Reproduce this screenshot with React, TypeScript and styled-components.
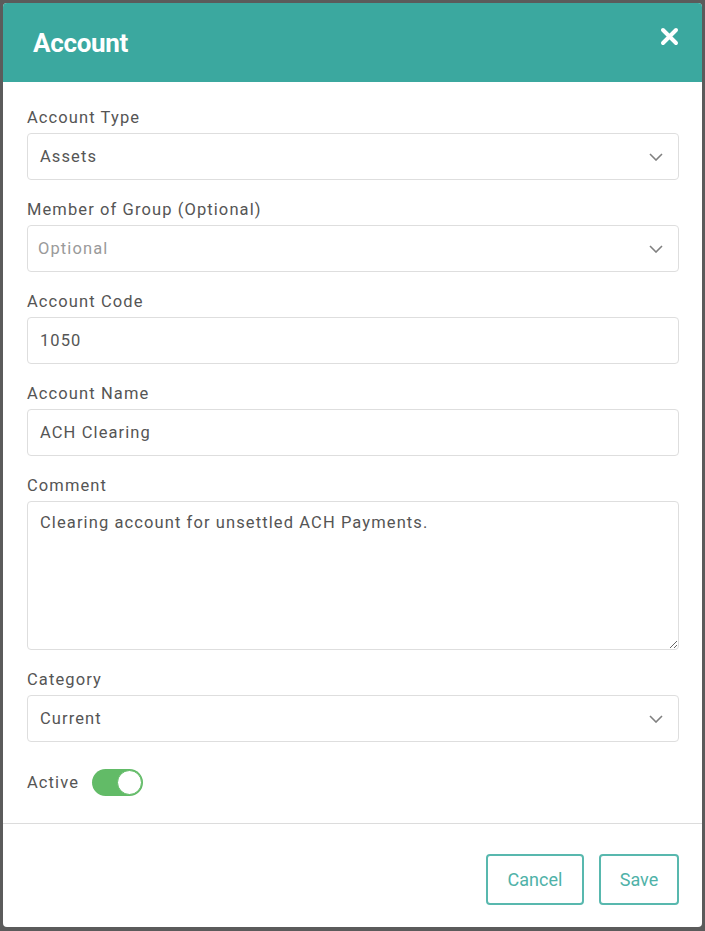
import React from "react";
import styled, { createGlobalStyle } from "styled-components";

const Global = createGlobalStyle`
  html, body { margin: 0; padding: 0; background: #5b5b5b; }
  body { font-family: Roboto, "Liberation Sans", Arial, sans-serif; }
  * { box-sizing: border-box; }
`;

const Frame = styled.div`
  width: 705px;
  height: 931px;
  padding: 3px 3px 4px 3px;
  background: #5b5b5b;
`;

const Dialog = styled.div`
  height: 100%;
  background: #fff;
  border-radius: 4px;
  overflow: hidden;
  display: flex;
  flex-direction: column;
`;

const Header = styled.div`
  height: 79px;
  background: #3ba89f;
  display: flex;
  align-items: center;
  justify-content: space-between;
  padding: 0 22px 0 30px;
`;

const Title = styled.h1`
  margin: 0;
  font-size: 26px;
  font-weight: 700;
  color: #fff;
  letter-spacing: -0.3px;
`;

const Close = styled.button`
  border: 0;
  background: none;
  padding: 0;
  width: 22px;
  height: 22px;
  margin-top: -12px;
  display: flex;
  align-items: center;
  justify-content: center;
  cursor: pointer;
`;

const Body = styled.div`
  padding: 26px 23px 27px 24px;
  border-bottom: 1px solid #dcdcdc;
`;

const Field = styled.div<{ $last?: boolean }>`
  display: flex;
  flex-direction: column;
  gap: 5px;
  margin-bottom: ${(p) => (p.$last ? "0" : "20px")};
`;

const textStyle = `
  font-size: 16.5px;
  letter-spacing: 1.1px;
  color: #555;
`;

const Label = styled.label`
  ${textStyle}
  line-height: 20px;
`;

const Box = styled.div`
  position: relative;
  height: 47px;
  border: 1px solid #dedede;
  border-radius: 4px;
  display: flex;
  align-items: center;
  padding: 0 12px;
  ${textStyle}
`;

const Value = styled.span<{ $placeholder?: boolean }>`
  flex: 1;
  color: ${(p) => (p.$placeholder ? "#9a9a9a" : "#555")};
  margin-left: ${(p) => (p.$placeholder ? "-2px" : "0")};
`;

const Chevron = styled.svg`
  width: 14px;
  height: 8px;
  margin-right: 3px;
`;

const TextArea = styled.textarea`
  height: 149px;
  border: 1px solid #dedede;
  border-radius: 4px;
  padding: 11px 12px;
  font-family: inherit;
  ${textStyle}
  line-height: 20px;
  resize: vertical;
  outline: none;
`;

const ActiveRow = styled.div`
  display: flex;
  align-items: center;
  gap: 13px;
  margin-top: 27px;
`;

const ActiveLabel = styled.span`
  ${textStyle}
`;

const Toggle = styled.div`
  width: 51px;
  height: 27px;
  border-radius: 14px;
  background: #62bb67;
  display: flex;
  justify-content: flex-end;
  padding: 1px;
`;

const Knob = styled.div`
  width: 25px;
  height: 25px;
  border-radius: 50%;
  background: #fff;
  border: 1px solid #62bb67;
`;

const Footer = styled.div`
  display: flex;
  justify-content: flex-end;
  gap: 15px;
  padding: 30px 23px 0 0;
`;

const Button = styled.button<{ $w: number }>`
  width: ${(p) => p.$w}px;
  height: 51px;
  border: 2px solid #58b8ae;
  border-radius: 4px;
  background: #fff;
  color: #4fb2a8;
  font-family: inherit;
  font-size: 18px;
  cursor: pointer;
`;

const ChevronIcon = () => (
  <Chevron viewBox="0 0 14 8">
    <path d="M1 1 L7 7 L13 1" fill="none" stroke="#808080" strokeWidth="1.6" />
  </Chevron>
);

const SelectBox = ({ value, placeholder }: { value: string; placeholder?: boolean }) => (
  <Box>
    <Value $placeholder={placeholder}>{value}</Value>
    <ChevronIcon />
  </Box>
);

export default function App() {
  return (
    <>
      <Global />
      <Frame>
        <Dialog>
          <Header>
            <Title>Account</Title>
            <Close aria-label="close">
              <svg width="19" height="19" viewBox="0 0 19 19">
                <path d="M3 3 L16 16 M16 3 L3 16" stroke="#fff" strokeWidth="4" strokeLinecap="round" />
              </svg>
            </Close>
          </Header>
          <Body>
            <Field>
              <Label>Account Type</Label>
              <SelectBox value="Assets" />
            </Field>
            <Field>
              <Label>Member of Group (Optional)</Label>
              <SelectBox value="Optional" placeholder />
            </Field>
            <Field>
              <Label>Account Code</Label>
              <Box>
                <Value>1050</Value>
              </Box>
            </Field>
            <Field>
              <Label>Account Name</Label>
              <Box>
                <Value>ACH Clearing</Value>
              </Box>
            </Field>
            <Field>
              <Label>Comment</Label>
              <TextArea defaultValue="Clearing account for unsettled ACH Payments." />
            </Field>
            <Field $last>
              <Label>Category</Label>
              <SelectBox value="Current" />
            </Field>
            <ActiveRow>
              <ActiveLabel>Active</ActiveLabel>
              <Toggle>
                <Knob />
              </Toggle>
            </ActiveRow>
          </Body>
          <Footer>
            <Button $w={98}>Cancel</Button>
            <Button $w={80}>Save</Button>
          </Footer>
        </Dialog>
      </Frame>
    </>
  );
}
